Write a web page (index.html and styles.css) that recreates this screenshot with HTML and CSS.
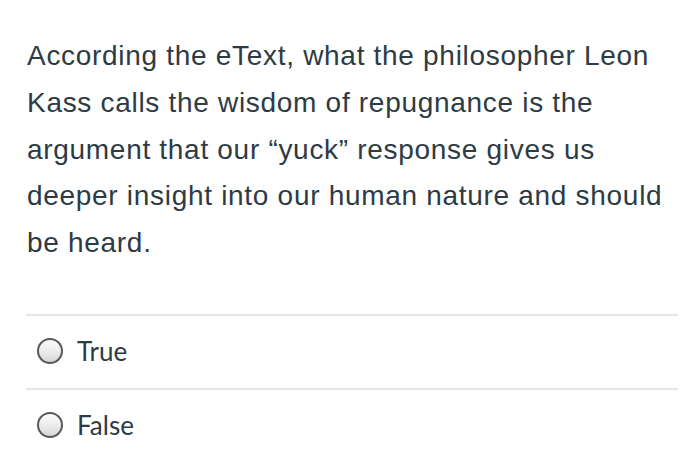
FILE: index.html
```html
<!DOCTYPE html>
<html lang="en">
<head>
<meta charset="utf-8">
<title>Question</title>
<link rel="stylesheet" href="styles.css">
</head>
<body>
<div class="question">
  <p class="question-text">According the eText, what the philosopher Leon Kass calls the wisdom of repugnance is the argument that our “yuck” response gives us deeper insight into our human nature and should be heard.</p>
  <div class="answers">
    <label class="answer"><span class="radio"></span><span class="answer-text">True</span></label>
    <label class="answer"><span class="radio"></span><span class="answer-text">False</span></label>
  </div>
</div>
</body>
</html>
```
FILE: styles.css
```css
html, body {
  margin: 0;
  padding: 0;
  background: #ffffff;
}

.question {
  padding: 33px 22px 0 26px;
  color: #2d3b45;
}

.question-text {
  margin: 0 0 47px 1px;
  font-family: "Liberation Sans", Arial, sans-serif;
  font-size: 28px;
  letter-spacing: 0.7px;
  line-height: 46.76px;
  padding-right: 0;
}

.answers {
  display: flex;
  flex-direction: column;
}

.answer {
  display: flex;
  align-items: center;
  gap: 14px;
  border-top: 2px solid #e6e6e6;
  padding: 22px 0 24px 11px;
  font-family: Lato, "Open Sans", sans-serif;
  font-size: 26px;
  line-height: 26px;
}

.radio {
  width: 26px;
  height: 26px;
  box-sizing: border-box;
  border-radius: 50%;
  border: 2px solid #555a5e;
  background: linear-gradient(180deg, #fbfbfb 0%, #e9e9e9 60%, #d6d6d6 100%);
  flex: none;
}

.answer-text {
  color: #2d3b45;
}
```
